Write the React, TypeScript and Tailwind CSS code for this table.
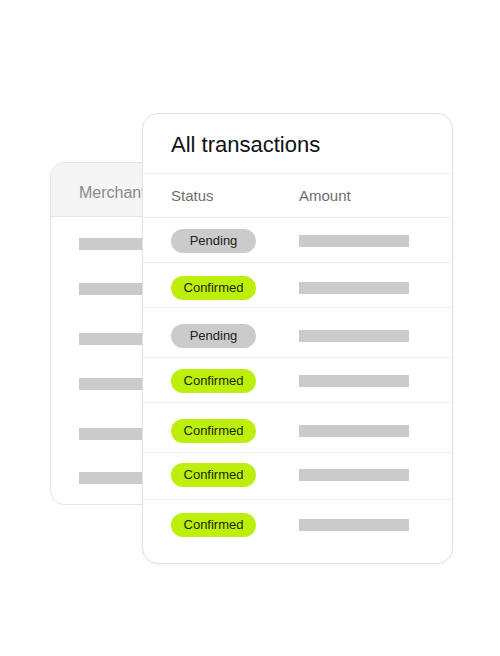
import React from "react"

const rows = [
  { status: "Pending", h: 45, pt: 11 },
  { status: "Confirmed", h: 45, pt: 13 },
  { status: "Pending", h: 50, pt: 16 },
  { status: "Confirmed", h: 45, pt: 11 },
  { status: "Confirmed", h: 50, pt: 16 },
  { status: "Confirmed", h: 47, pt: 10 },
  { status: "Confirmed", h: 63, pt: 13 },
]

const backGaps = [21, 33, 38, 33, 38, 32]

function StatusPill({ status }: { status: string }) {
  const confirmed = status === "Confirmed"
  return (
    <span
      className={
        confirmed
          ? "flex h-[24px] w-[85px] items-center justify-center rounded-full bg-[#bcf00c] text-[13px] text-[#1c2a00]"
          : "flex h-[24px] w-[85px] items-center justify-center rounded-full bg-[#cbcbcb] text-[13px] text-[#222]"
      }
    >
      {status}
    </span>
  )
}

export default function App() {
  return (
    <div className="flex h-[656px] w-[500px] items-start bg-white font-['Liberation_Sans',Arial,sans-serif]">
      {/* back card */}
      <div className="ml-[50px] mt-[162px] h-[343px] w-[160px] shrink-0 overflow-hidden rounded-[14px] border border-[#e4e4e4] bg-white">
        <div className="flex h-[54px] items-center border-b border-[#e6e6e6] bg-[#f5f5f5] pl-[28px] pt-[6px] text-[16px] text-[#8a8a8a]">
          Merchant
        </div>
        <div className="flex flex-col">
          {backGaps.map((g, i) => (
            <div key={i} style={{ marginTop: g }} className="ml-[28px] h-[12px] w-[110px] bg-[#cbcbcb]" />
          ))}
        </div>
      </div>

      {/* front card */}
      <div className="relative z-10 -ml-[68px] mt-[113px] w-[311px] shrink-0 rounded-[16px] border border-[#e2e2e2] bg-white shadow-[0_1px_3px_rgba(0,0,0,0.04)]">
        <div className="flex h-[60px] items-center border-b border-[#f0f0f0] pl-[28px] pt-[2px] text-[22px] text-[#111]">
          All transactions
        </div>
        <div className="flex h-[44px] items-center border-b border-[#f0f0f0] pl-[28px] pt-[2px] text-[15px] text-[#6e6e6e]">
          <span className="w-[128px]">Status</span>
          <span>Amount</span>
        </div>
        {rows.map((r, i) => (
          <div
            key={i}
            style={{ height: r.h, paddingTop: r.pt }}
            className={
              i < rows.length - 1
                ? "flex items-start border-b border-[#f0f0f0] pl-[28px]"
                : "flex items-start pl-[28px]"
            }
          >
            <div className="w-[128px]">
              <StatusPill status={r.status} />
            </div>
            <div className="mt-[6px] h-[12px] w-[110px] bg-[#cbcbcb]" />
          </div>
        ))}
      </div>
    </div>
  )
}
